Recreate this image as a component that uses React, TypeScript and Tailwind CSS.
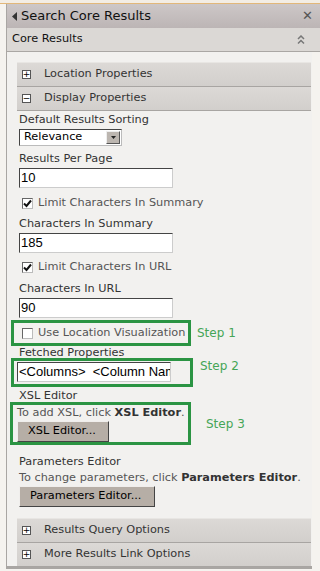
import React from 'react'

const font = { fontFamily: '"DejaVu Sans", Verdana, sans-serif' }

function Section({ label, open }: { label: string; open?: boolean }) {
  return (
    <div className="flex h-[24px] items-center border-b border-[#a8a5a2] bg-gradient-to-b from-[#dcd9d6] to-[#d2cfcc] pl-[5px]">
      <span className="flex h-[9px] w-[9px] items-center justify-center border border-[#555] bg-white text-[9px] leading-none text-black">
        {open ? '−' : '+'}
      </span>
      <span className="ml-[13px] text-[11.3px] text-[#333]">{label}</span>
    </div>
  )
}

function Check({ checked, label }: { checked?: boolean; label: string }) {
  return (
    <div className="flex h-[14px] items-center pl-[3px]">
      <span className="flex h-[11px] w-[11px] items-center justify-center border border-[#666] border-b-[#bbb] border-r-[#bbb] bg-white">
        {checked && (
          <svg width="9" height="9" viewBox="0 0 9 9">
            <path d="M1 4.5 L3.5 7 L8 1.5" stroke="#111" strokeWidth="2" fill="none" />
          </svg>
        )}
      </span>
      <span className="ml-[5px] text-[11.3px] text-[#555]">{label}</span>
    </div>
  )
}

function TextBox({ value }: { value: string }) {
  return (
    <div
      className="h-[20px] w-[154px] overflow-hidden whitespace-pre border border-[#444] border-b-[#ccc] border-r-[#ccc] bg-white pl-[1px] text-[13px] leading-[18px] text-black"
      style={{ fontFamily: '"Liberation Sans", Arial, sans-serif' }}
    >
      {value}
    </div>
  )
}

function Btn({ label, w }: { label: string; w: string }) {
  return (
    <div className={`flex h-[21px] ${w} items-center border border-[#f0eeec] border-b-[#444] border-r-[#444] bg-[#b6aea6] pl-[10px] text-[11.3px] text-black`}>
      {label}
    </div>
  )
}

export default function App() {
  return (
    <div className="h-[571px] w-[320px] overflow-hidden bg-[#f5f3ef]" style={font}>
      <div className="h-[4px] border-b border-[#e2b779] bg-[#f3ede4]" />
      <div className="ml-[6px] h-[565px] w-[306px] border-b-[3px] border-l border-[#a9a6a3] border-b-[#a9a6a3] bg-[#f2f1ef]">
        <div className="flex h-[24px] w-[314px] items-center bg-gradient-to-b from-[#cdc7c7] to-[#bcb5b5] pl-[5px]">
          <svg width="5" height="9" viewBox="0 0 5 9">
            <path d="M5 0 L0 4.5 L5 9 Z" fill="#333" />
          </svg>
          <span className="ml-[4px] text-[13px] text-[#111]">Search Core Results</span>
          <span className="ml-auto mr-[8px] text-[13px] font-bold text-[#555]">✕</span>
        </div>
        <div className="flex h-[24px] w-[314px] items-center border-b border-[#aaa7a4] bg-[#dbd8d5] pl-[5px]">
          <span className="text-[11.3px] text-[#111]">Core Results</span>
          <svg className="ml-auto mr-[16px]" width="8" height="10" viewBox="0 0 8 10">
            <path d="M1 4 L4 1 L7 4 M1 8.5 L4 5.5 L7 8.5" stroke="#777" strokeWidth="1.5" fill="none" />
          </svg>
        </div>
        <div className="pl-[10px] pt-[10px]">
          <div className="w-[294px] border-t border-[#e8e6e3]">
            <Section label="Location Properties" />
            <Section label="Display Properties" open />
          </div>
          <div className="pl-[2px] text-[11.3px] text-[#333]">
            <div className="mt-[2px] h-[14px] leading-[14px]">Default Results Sorting</div>
            <div className="mt-[2px] flex h-[17px] w-[103px] items-center border border-[#444] border-b-[#bbb] border-r-[#bbb] bg-white">
              <span className="ml-[4px] text-[11.3px] text-black">Relevance</span>
              <span className="ml-auto mr-[1px] flex h-[13px] w-[14px] items-center justify-center border border-[#eee] border-b-[#555] border-r-[#555] bg-[#bcb6b0]">
                <svg width="5" height="3" viewBox="0 0 5 3"><path d="M0 0 H5 L2.5 3 Z" fill="#222" /></svg>
              </span>
            </div>
            <div className="mt-[6px] h-[14px] leading-[14px]">Results Per Page</div>
            <div className="mt-[2px]"><TextBox value="10" /></div>
            <div className="mt-[8px]"><Check checked label="Limit Characters In Summary" /></div>
            <div className="mt-[7px] h-[14px] leading-[14px]">Characters In Summary</div>
            <div className="mt-[2px]"><TextBox value="185" /></div>
            <div className="mt-[7px]"><Check checked label="Limit Characters In URL" /></div>
            <div className="mt-[8px] h-[14px] leading-[14px]">Characters In URL</div>
            <div className="mt-[2px]"><TextBox value="90" /></div>

            <div className="mt-[2px] flex items-center">
              <div className="-ml-[8px] flex h-[26px] w-[180px] items-center border-[3px] border-[#2b9443] pl-[5px]">
                <Check label="Use Location Visualization" />
              </div>
              <span className="ml-[6px] text-[12px] text-[#45a556]">Step 1</span>
            </div>
            <div className="h-[11px] overflow-visible whitespace-nowrap leading-[14px]">Fetched Properties</div>
            <div className="relative flex items-center">
              <div className="-ml-[8px] flex h-[29px] w-[182px] items-center border-[3px] border-[#2b9443] bg-[#f2f1ef] pl-[3px]">
                <TextBox value="<Columns>  <Column Name" />
              </div>
              <span className="mb-[12px] ml-[7px] text-[12px] text-[#45a556]">Step 2</span>
            </div>
            <div className="mt-[2px] h-[13px] leading-[14px]">XSL Editor</div>
            <div className="flex items-center">
              <div className="-ml-[9px] h-[43px] w-[181px] border-[3px] border-[#2b9443] pl-[4px] pt-[1px]">
                <div className="h-[14px] leading-[14px] text-[#555]">To add XSL, click <b className="text-[#333]">XSL Editor</b>.</div>
                <div className="mt-[1px]"><Btn label="XSL Editor..." w="w-[92px]" /></div>
              </div>
              <span className="ml-[15px] text-[12px] text-[#45a556]">Step 3</span>
            </div>
            <div className="mt-[10px] h-[14px] leading-[14px]">Parameters Editor</div>
            <div className="mt-[2px] h-[14px] whitespace-nowrap leading-[14px] text-[#555]">
              To change parameters, click <b className="text-[#333]">Parameters Editor</b>.
            </div>
            <div className="mt-[1px]"><Btn label="Parameters Editor..." w="w-[136px]" /></div>
          </div>
          <div className="mt-[11px] w-[294px] border-t border-[#e8e6e3]">
            <Section label="Results Query Options" />
            <Section label="More Results Link Options" />
          </div>
        </div>
      </div>
    </div>
  )
}
